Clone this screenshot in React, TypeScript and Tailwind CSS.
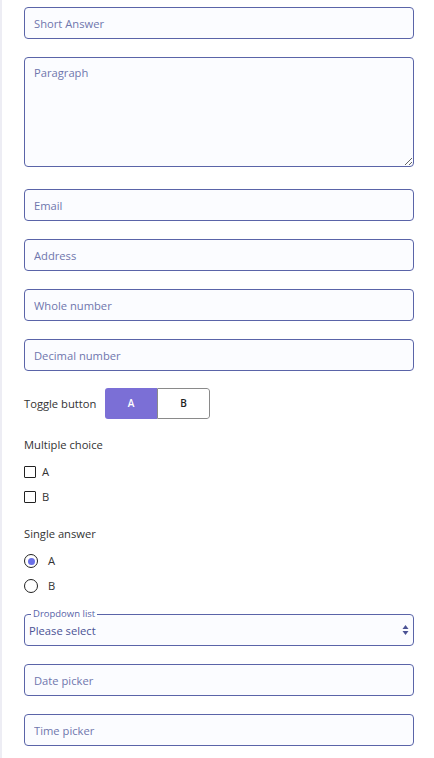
import React, { useState } from 'react';

const fieldClass =
  'w-full h-[32px] rounded-[4px] border-[1.5px] border-[#5a64a8] bg-[#fbfcff] px-[9px] text-[11.2px] text-[#333] placeholder:text-[#6f76ad] outline-none';

const TextField: React.FC<{ placeholder: string; type?: string }> = ({ placeholder, type = 'text' }) => (
  <input type={type} placeholder={placeholder} className={fieldClass} />
);

const App: React.FC = () => {
  const [toggle, setToggle] = useState<'A' | 'B'>('A');
  const [single, setSingle] = useState<'A' | 'B'>('A');
  const [multi, setMulti] = useState<Record<string, boolean>>({ A: false, B: false });

  return (
    <div className="min-h-screen bg-white font-['Open_Sans',sans-serif] text-[#333]">
      <div className="min-h-screen border-l-2 border-[#ededf4] pl-[22px] pr-[20px] pt-[7px] pb-[12px]">
        <div className="flex flex-col gap-[18px]">
          <TextField placeholder="Short Answer" />
          <textarea
            placeholder="Paragraph"
            className="w-full h-[110px] rounded-[4px] border-[1.5px] border-[#5a64a8] bg-[#fbfcff] px-[9px] py-[7px] text-[11.2px] text-[#333] placeholder:text-[#6f76ad] outline-none"
          />
          <div className="flex flex-col gap-[18px] pt-[4px]">
            <TextField placeholder="Email" type="email" />
            <TextField placeholder="Address" />
            <TextField placeholder="Whole number" />
            <TextField placeholder="Decimal number" />
          </div>
        </div>

        {/* toggle */}
        <div className="mt-[17px] flex items-center gap-[9px]">
          <span className="text-[11.2px] leading-[16px] text-[#333]">Toggle button</span>
          <div className="flex h-[31px] w-[105px] rounded-[3px] overflow-hidden">
            <button
              onClick={() => setToggle('A')}
              className={
                toggle === 'A'
                  ? 'flex-1 bg-[#7b6fd6] text-[10px] font-semibold text-white'
                  : 'flex-1 border-[1.5px] border-[#8a8a8a] rounded-l-[3px] bg-white text-[10px] font-semibold text-[#222]'
              }
            >
              A
            </button>
            <button
              onClick={() => setToggle('B')}
              className={
                toggle === 'B'
                  ? 'flex-1 bg-[#7b6fd6] text-[10px] font-semibold text-white'
                  : 'flex-1 border-[1.5px] border-[#8a8a8a] rounded-r-[3px] bg-white text-[10px] font-semibold text-[#222]'
              }
            >
              B
            </button>
          </div>
        </div>

        <div className="mt-[18px] text-[11.2px] leading-[16px] text-[#333]">Multiple choice</div>
        <div className="mt-[12px] flex flex-col gap-[11px]">
          {['A', 'B'].map((k) => (
            <label key={k} className="flex h-[14px] items-center gap-[6px] text-[11.2px] leading-[14px] text-[#333]">
              <span
                onClick={() => setMulti({ ...multi, [k]: !multi[k] })}
                className="h-[12px] w-[12px] border-[1.5px] border-[#222] rounded-[1px] bg-white"
              />
              {k}
            </label>
          ))}
        </div>

        <div className="mt-[22px] text-[11.2px] leading-[16px] text-[#333]">Single answer</div>
        <div className="mt-[12px] flex flex-col gap-[11px]">
          {(['A', 'B'] as const).map((k) => (
            <label
              key={k}
              className="flex h-[14px] items-center gap-[10px] text-[11.2px] leading-[14px] text-[#333]"
              onClick={() => setSingle(k)}
            >
              <span className="flex h-[14px] w-[14px] items-center justify-center rounded-full border-[1.5px] border-[#222] bg-white">
                {single === k && <span className="h-[7px] w-[7px] rounded-full bg-[#6a6fe6]" />}
              </span>
              {k}
            </label>
          ))}
        </div>

        {/* dropdown with floating legend */}
        <div className="relative mt-[21px] h-[32px] rounded-[4px] border-[1.5px] border-[#5a64a8] bg-[#fbfcff]">
          <span className="absolute -top-[7px] left-[6px] bg-white px-[2px] text-[9.5px] leading-[12px] text-[#5a64a8]">
            Dropdown list
          </span>
          <select className="h-full w-full appearance-none bg-transparent pl-[4px] pt-[2px] text-[11.2px] text-[#4a5294] outline-none">
            <option>Please select</option>
          </select>
          <svg className="pointer-events-none absolute right-[4px] top-[9px]" width="7" height="12" viewBox="0 0 7 12">
            <path d="M3.5 1 L6.5 5 H0.5 Z" fill="#4a5294" />
            <path d="M3.5 11 L6.5 7 H0.5 Z" fill="#4a5294" />
          </svg>
        </div>

        <div className="mt-[18px] flex flex-col gap-[18px]">
          <TextField placeholder="Date picker" />
          <TextField placeholder="Time picker" />
        </div>
      </div>
    </div>
  );
};

export default App;
